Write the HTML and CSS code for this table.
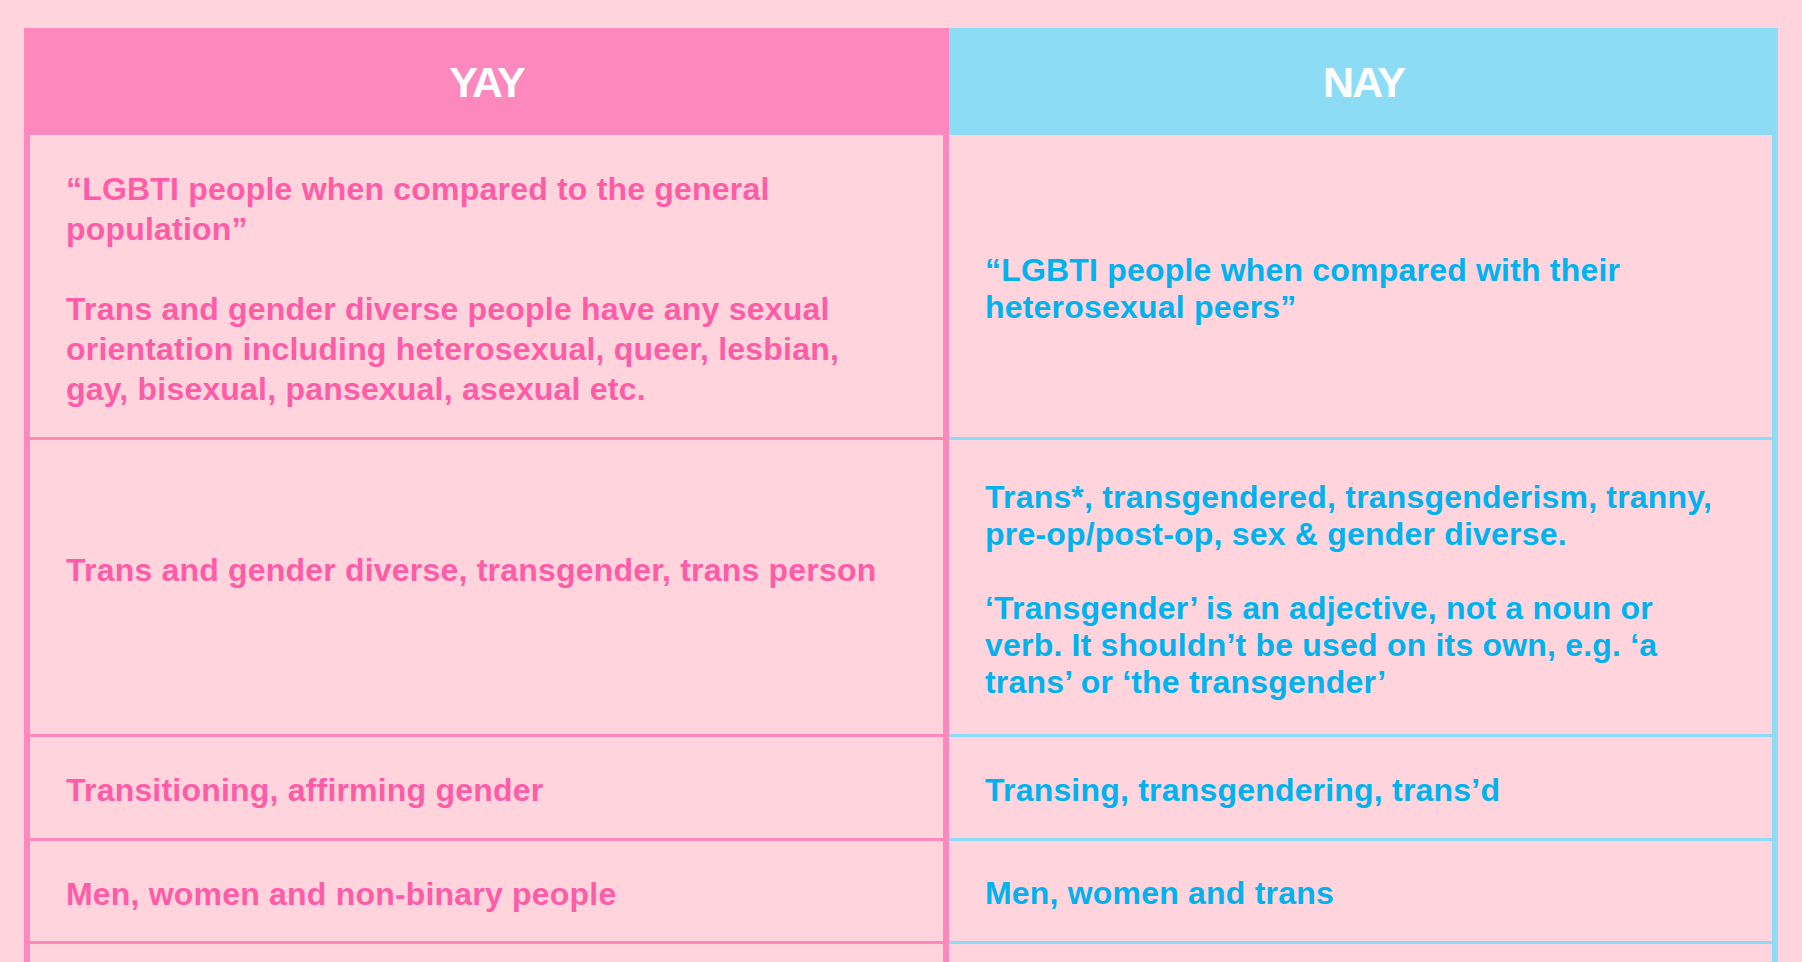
FILE: index.html
```html
<!DOCTYPE html>
<html lang="en">
<head>
<meta charset="utf-8">
<title>Yay / Nay</title>
<link rel="stylesheet" href="styles.css">
</head>
<body>
<main class="page">
  <div class="table">
    <div class="head yay">YAY</div>
    <div class="head nay">NAY</div>

    <div class="cell yay-cell r1">
      <p>“LGBTI people when compared to the general population”</p>
      <p>Trans and gender diverse people have any sexual orientation including heterosexual, queer, lesbian, gay, bisexual, pansexual, asexual etc.</p>
    </div>
    <div class="cell nay-cell r1">
      <p>“LGBTI people when compared with their heterosexual peers”</p>
    </div>

    <div class="cell yay-cell r2 raised">
      <p>Trans and gender diverse, transgender, trans person</p>
    </div>
    <div class="cell nay-cell r2">
      <p>Trans*, transgendered, transgenderism, tranny, pre-op/post-op, sex &amp; gender diverse.</p>
      <p>‘Transgender’ is an adjective, not a noun or verb. It shouldn’t be used on its own, e.g. ‘a trans’ or ‘the transgender’</p>
    </div>

    <div class="cell yay-cell r3">
      <p>Transitioning, affirming gender</p>
    </div>
    <div class="cell nay-cell r3">
      <p>Transing, transgendering, trans’d</p>
    </div>

    <div class="cell yay-cell r4">
      <p>Men, women and non-binary people</p>
    </div>
    <div class="cell nay-cell r4">
      <p>Men, women and trans</p>
    </div>

    <div class="cell yay-cell r5"></div>
    <div class="cell nay-cell r5"></div>
  </div>
</main>
</body>
</html>
```

FILE: styles.css
```css
* {
  box-sizing: border-box;
}

html, body {
  margin: 0;
  padding: 0;
  background: #ffd4dc;
  overflow: hidden;
}

.page {
  padding: 28px 24px 0;
  font-family: "Liberation Sans", Arial, sans-serif;
  font-weight: 700;
}

.table {
  display: grid;
  grid-template-columns: 925px 829px;
  grid-template-rows: 107px 305px 297px 104px 103px 120px;
}

.head {
  display: flex;
  align-items: center;
  justify-content: center;
  color: #ffffff;
  font-size: 43px;
  letter-spacing: -2px;
  line-height: 1;
  padding-top: 2px;
}

.head.yay {
  background: #fd88bd;
}

.head.nay {
  background: #8ddcf5;
}

.cell {
  display: flex;
  flex-direction: column;
  justify-content: center;
  padding: 5px 36px 0;
  font-size: 32px;
  letter-spacing: 0.2px;
}

.cell p {
  margin: 0;
}

.cell.raised {
  padding-bottom: 40px;
}

.yay-cell {
  color: #ff5ca8;
  line-height: 40px;
  border-left: 6px solid #fd88bd;
  border-right: 6px solid #fd88bd;
  border-bottom: 3px solid #fd88bd;
}

.yay-cell p + p {
  margin-top: 40px;
}

.nay-cell {
  color: #00b2ee;
  line-height: 37px;
  border-right: 6px solid #8ddcf5;
  border-bottom: 3px solid #8ddcf5;
}

.nay-cell p + p {
  margin-top: 37px;
}
```
